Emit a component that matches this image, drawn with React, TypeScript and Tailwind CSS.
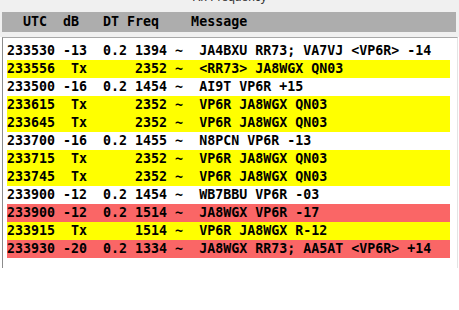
import React from 'react';

type Row = { text: string; kind: 'rx' | 'tx' | 'me' };

const ROWS: Row[] = [
  { text: '233530 -13  0.2 1394 ~  JA4BXU RR73; VA7VJ <VP6R> -14', kind: 'rx' },
  { text: '233556  Tx      2352 ~  <RR73> JA8WGX QN03', kind: 'tx' },
  { text: '233500 -16  0.2 1454 ~  AI9T VP6R +15', kind: 'rx' },
  { text: '233615  Tx      2352 ~  VP6R JA8WGX QN03', kind: 'tx' },
  { text: '233645  Tx      2352 ~  VP6R JA8WGX QN03', kind: 'tx' },
  { text: '233700 -16  0.2 1455 ~  N8PCN VP6R -13', kind: 'rx' },
  { text: '233715  Tx      2352 ~  VP6R JA8WGX QN03', kind: 'tx' },
  { text: '233745  Tx      2352 ~  VP6R JA8WGX QN03', kind: 'tx' },
  { text: '233900 -12  0.2 1454 ~  WB7BBU VP6R -03', kind: 'rx' },
  { text: '233900 -12  0.2 1514 ~  JA8WGX VP6R -17', kind: 'me' },
  { text: '233915  Tx      1514 ~  VP6R JA8WGX R-12', kind: 'tx' },
  { text: '233930 -20  0.2 1334 ~  JA8WGX RR73; AA5AT <VP6R> +14', kind: 'me' },
];

const rowBg = {
  rx: 'bg-white',
  tx: 'bg-[#ffff00]',
  me: 'bg-[#fa6666]',
};

export default function App() {
  return (
    <div className="w-[459px] h-[310px] bg-white overflow-hidden font-['DejaVu_Sans_Mono',monospace] font-bold text-[13.3px] text-black">
      {/* title strip, mostly cut off */}
      <div className="bg-[#f0f0f0] h-[12px] overflow-hidden text-center">
        <div className="-mt-[9px] font-['Liberation_Sans',sans-serif] font-normal text-[12px] leading-[12px] text-[#333]">
          Rx Frequency
        </div>
      </div>

      <div className="bg-[#f0f0f0] pl-[2px] pr-[3px] pb-[5px]">
        <div className="h-[20px] bg-[#adadad] flex items-center pl-[5px] whitespace-pre leading-none">
          {'  UTC  dB   DT Freq    Message'}
        </div>
      </div>

      <div className="ml-[2px] w-[456px] h-[231px] border-l border-t border-r border-l-[#8c8c8c] border-t-[#a8a8a8] border-r-[#e4e4e4] pt-[4px] pl-[4px]">
        {ROWS.map((r, i) => (
          <div
            key={i}
            className={`w-[443px] h-[18px] flex items-center whitespace-pre leading-none ${rowBg[r.kind]}`}
          >
            {r.text}
          </div>
        ))}
      </div>
    </div>
  );
}
